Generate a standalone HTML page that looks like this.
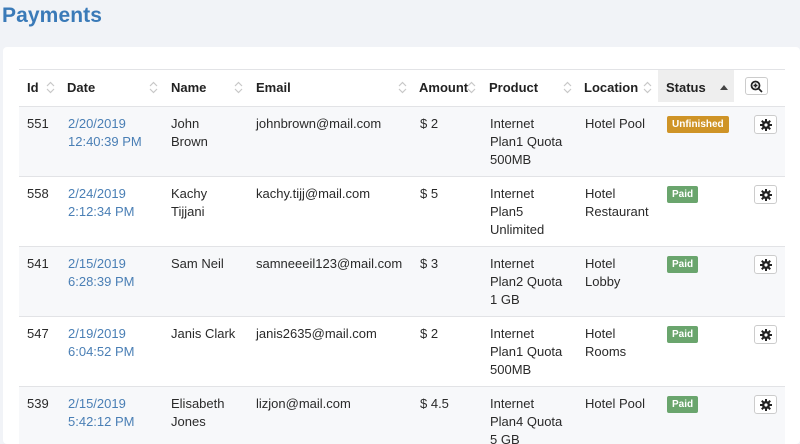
<!DOCTYPE html>
<html><head><meta charset="utf-8"><style>
*{margin:0;padding:0;box-sizing:border-box}
html,body{width:800px;height:444px;overflow:hidden}
body{background:#f1f3f7;font-family:"Liberation Sans",Arial,sans-serif;font-size:13px;color:#2a2a2a;position:relative}
h1{position:absolute;left:2px;top:4px;font-size:21px;font-weight:bold;color:#3a7ab8;letter-spacing:0.1px}
.card{position:absolute;left:3px;top:47px;width:797px;height:397px;background:#fff;border-radius:4px}
.a{position:absolute;line-height:18px;white-space:nowrap}
.th{font-weight:bold;color:#222;top:79px}
.row{position:absolute;left:19px;width:766px;height:70px;border-top:1px solid #e2e3e6}
.odd{background:#f7f8fa}
.d{color:#4a7fb5}
.s{position:absolute;top:81px}
.badge{position:absolute;left:667px;color:#fff;font-weight:bold;font-size:10px;padding:0 5px;height:17px;line-height:17px;border-radius:2px}
.btn{position:absolute;width:23px;height:19px;border:1px solid #ccc;border-radius:3px;background:#fff;display:flex;align-items:center;justify-content:center}
</style></head><body>
<h1>Payments</h1>
<div class="card"></div>
<div style="position:absolute;left:19px;top:69px;width:766px;border-top:1px solid #e2e3e6"></div>
<div style="position:absolute;left:658px;top:70px;width:76px;height:32px;background:#eeeeee"></div>
<svg width="0" height="0" style="position:absolute"><defs><symbol id="srt" viewBox="0 0 9 13"><path d="M1 5L4.5 1.5L8 5M1 8L4.5 11.5L8 8" fill="none" stroke="#c8c8c8" stroke-width="1.2"/></symbol></defs></svg>
<div class="a th" style="left:27px">Id</div><svg class="s" style="left:46px" width="9" height="13"><use href="#srt"/></svg>
<div class="a th" style="left:67px">Date</div><svg class="s" style="left:149px" width="9" height="13"><use href="#srt"/></svg>
<div class="a th" style="left:171px">Name</div><svg class="s" style="left:234px" width="9" height="13"><use href="#srt"/></svg>
<div class="a th" style="left:256px">Email</div><svg class="s" style="left:398px" width="9" height="13"><use href="#srt"/></svg>
<div class="a th" style="left:419px">Amount</div><svg class="s" style="left:467px" width="9" height="13"><use href="#srt"/></svg>
<div class="a th" style="left:489px">Product</div><svg class="s" style="left:563px" width="9" height="13"><use href="#srt"/></svg>
<div class="a th" style="left:584px">Location</div><svg class="s" style="left:643px" width="9" height="13"><use href="#srt"/></svg>
<div class="a th" style="left:666px">Status</div>
<div style="position:absolute;left:720px;top:85px;width:0;height:0;border-left:4px solid transparent;border-right:4px solid transparent;border-bottom:5px solid #444"></div>
<div class="btn" style="left:745px;top:77px;width:23px;height:18px"><svg width="13" height="13" viewBox="0 0 13 13"><circle cx="5.5" cy="5.5" r="4" fill="none" stroke="#222" stroke-width="1.8"/><path d="M8.5 8.5L12 12M3.5 5.5h4M5.5 3.5v4" stroke="#222" stroke-width="1.6"/></svg></div>

<div class="row odd" style="top:106px"></div>
<div class="row" style="top:176px"></div>
<div class="row odd" style="top:246px"></div>
<div class="row" style="top:316px"></div>
<div class="row odd" style="top:386px"></div>

<div class="a" style="left:27px;top:115px">551</div>
<div class="a d" style="left:68px;top:115px">2/20/2019<br>12:40:39 PM</div>
<div class="a" style="left:171px;top:115px">John<br>Brown</div>
<div class="a" style="left:256px;top:115px">johnbrown@mail.com</div>
<div class="a" style="left:420px;top:115px">$ 2</div>
<div class="a" style="left:490px;top:115px">Internet<br>Plan1 Quota<br>500MB</div>
<div class="a" style="left:585px;top:115px">Hotel Pool</div>
<div class="badge" style="top:116px;background:#cf9427">Unfinished</div>

<div class="a" style="left:27px;top:185px">558</div>
<div class="a d" style="left:68px;top:185px">2/24/2019<br>2:12:34 PM</div>
<div class="a" style="left:171px;top:185px">Kachy<br>Tijjani</div>
<div class="a" style="left:256px;top:185px">kachy.tijj@mail.com</div>
<div class="a" style="left:420px;top:185px">$ 5</div>
<div class="a" style="left:490px;top:185px">Internet<br>Plan5<br>Unlimited</div>
<div class="a" style="left:585px;top:185px">Hotel<br>Restaurant</div>
<div class="badge" style="top:186px;background:#6aa56d">Paid</div>

<div class="a" style="left:27px;top:255px">541</div>
<div class="a d" style="left:68px;top:255px">2/15/2019<br>6:28:39 PM</div>
<div class="a" style="left:171px;top:255px">Sam Neil</div>
<div class="a" style="left:256px;top:255px">samneeeil123@mail.com</div>
<div class="a" style="left:420px;top:255px">$ 3</div>
<div class="a" style="left:490px;top:255px">Internet<br>Plan2 Quota<br>1 GB</div>
<div class="a" style="left:585px;top:255px">Hotel<br>Lobby</div>
<div class="badge" style="top:256px;background:#6aa56d">Paid</div>

<div class="a" style="left:27px;top:325px">547</div>
<div class="a d" style="left:68px;top:325px">2/19/2019<br>6:04:52 PM</div>
<div class="a" style="left:171px;top:325px">Janis Clark</div>
<div class="a" style="left:256px;top:325px">janis2635@mail.com</div>
<div class="a" style="left:420px;top:325px">$ 2</div>
<div class="a" style="left:490px;top:325px">Internet<br>Plan1 Quota<br>500MB</div>
<div class="a" style="left:585px;top:325px">Hotel<br>Rooms</div>
<div class="badge" style="top:326px;background:#6aa56d">Paid</div>

<div class="a" style="left:27px;top:395px">539</div>
<div class="a d" style="left:68px;top:395px">2/15/2019<br>5:42:12 PM</div>
<div class="a" style="left:171px;top:395px">Elisabeth<br>Jones</div>
<div class="a" style="left:256px;top:395px">lizjon@mail.com</div>
<div class="a" style="left:420px;top:395px">$ 4.5</div>
<div class="a" style="left:490px;top:395px">Internet<br>Plan4 Quota<br>5 GB</div>
<div class="a" style="left:585px;top:395px">Hotel Pool</div>
<div class="badge" style="top:396px;background:#6aa56d">Paid</div>

<svg width="0" height="0" style="position:absolute"><defs><symbol id="gear" viewBox="0 0 12 12"><g fill="#222"><circle cx="6" cy="6" r="4"/><rect x="5" y="0" width="2" height="12"/><rect x="0" y="5" width="12" height="2"/><rect x="5" y="0" width="2" height="12" transform="rotate(45 6 6)"/><rect x="5" y="0" width="2" height="12" transform="rotate(-45 6 6)"/></g><circle cx="6" cy="6" r="1.6" fill="#fff"/></symbol></defs></svg>
<div class="btn" style="left:754px;top:115px"><svg width="12" height="12"><use href="#gear"/></svg></div>
<div class="btn" style="left:754px;top:185px"><svg width="12" height="12"><use href="#gear"/></svg></div>
<div class="btn" style="left:754px;top:255px"><svg width="12" height="12"><use href="#gear"/></svg></div>
<div class="btn" style="left:754px;top:325px"><svg width="12" height="12"><use href="#gear"/></svg></div>
<div class="btn" style="left:754px;top:395px"><svg width="12" height="12"><use href="#gear"/></svg></div>
</body></html>
